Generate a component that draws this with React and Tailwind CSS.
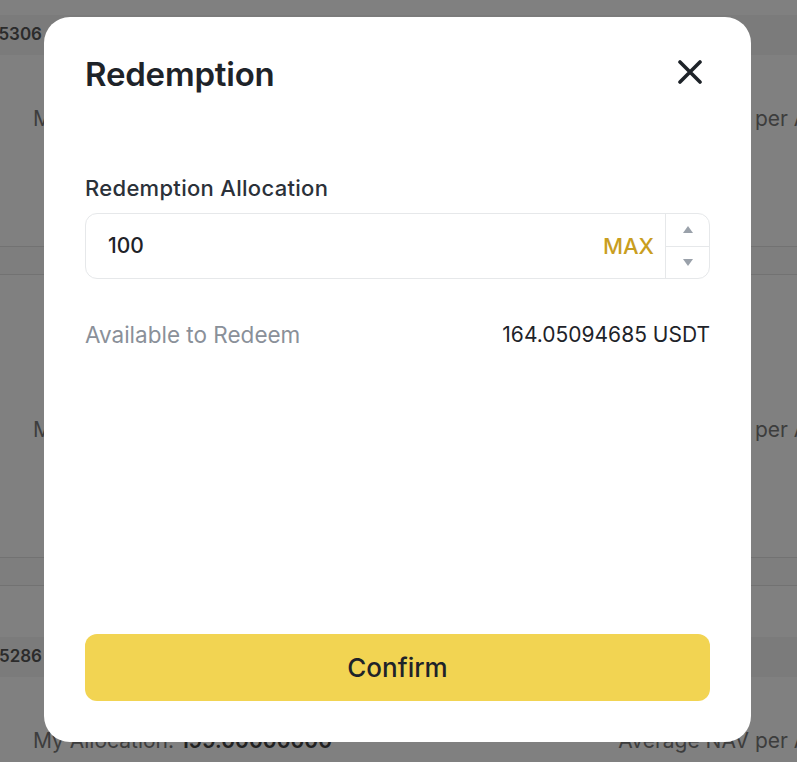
import React from 'react';

const font = { fontFamily: 'Inter, "Noto Sans", sans-serif' };

// one card of the list behind the dialog
function BackCard({ id }) {
  return (
    <div className="h-[282px] shrink-0 flex flex-col">
      <div className={id ? 'mt-[51px] h-[40px] flex items-center bg-[#7b7b7b]' : 'mt-[51px] h-[40px]'}>
        {id && (
          <div className="w-[42px] overflow-hidden flex justify-end">
            <span className="text-[17px] font-semibold text-[#2b2b2b] whitespace-nowrap">{id}</span>
          </div>
        )}
      </div>
      <div className="mt-[48px] flex items-center justify-between px-[33px] whitespace-nowrap text-[21px] text-[#3d3d3d]">
        <span>
          My Allocation: <span className="font-semibold text-[#222]">199.00000000</span>
        </span>
        <span className="mr-[-128px]">Average NAV per Allocation</span>
      </div>
    </div>
  );
}

function Separator() {
  return <div className="h-[29px] shrink-0 border-y border-[#727272] bg-[#7e7e7e]" />;
}

function Stepper() {
  return (
    <div className="w-[44px] self-stretch flex flex-col border-l border-[#e6e8ea]">
      <div className="flex-1 flex items-center justify-center border-b border-[#e6e8ea]">
        <svg width="10" height="7" viewBox="0 0 10 7">
          <path d="M5 0 L10 7 L0 7 Z" fill="#9aa1aa" />
        </svg>
      </div>
      <div className="flex-1 flex items-center justify-center">
        <svg width="10" height="7" viewBox="0 0 10 7">
          <path d="M0 0 L10 0 L5 7 Z" fill="#9aa1aa" />
        </svg>
      </div>
    </div>
  );
}

export default function App() {
  return (
    <div className="relative w-[797px] h-[762px] overflow-hidden bg-[#808080]" style={font}>
      {/* list behind the overlay */}
      <div className="flex flex-col mt-[-36px]">
        <BackCard id="1234565306" />
        <Separator />
        <BackCard />
        <Separator />
        <BackCard id="1234565286" />
      </div>

      {/* dialog */}
      <div className="absolute left-[44px] top-[17px] w-[707px] h-[725px] bg-white rounded-[26px] flex flex-col px-[41px] pt-[40px] pb-[41px]">
        <div className="flex items-center justify-between h-[36px]">
          <h2 className="text-[33px] font-semibold text-[#1e2329] tracking-[-0.2px]">Redemption</h2>
          <button className="mr-[8px] mt-[-6px]">
            <svg width="24" height="24" viewBox="0 0 24 24">
              <path d="M2 2 L22 22 M22 2 L2 22" stroke="#1e2329" strokeWidth="3.6" strokeLinecap="round" />
            </svg>
          </button>
        </div>

        <label className="mt-[81px] text-[22px] tracking-[0.3px] font-medium text-[#2b3139] leading-[28px]">
          Redemption Allocation
        </label>
        <div className="mt-[11px] h-[66px] flex items-center border border-[#e6e8ea] rounded-[12px] overflow-hidden">
          <span className="flex-1 pl-[22px] text-[21px] font-medium text-[#1e2329]">100</span>
          <span className="pr-[11px] text-[22px] font-medium text-[#c99e1f]">MAX</span>
          <Stepper />
        </div>

        <div className="mt-[42px] flex items-center justify-between leading-[28px]">
          <span className="text-[22.5px] text-[#8a9099]">Available to Redeem</span>
          <span className="text-[21px] text-[#1e2329]">164.05094685 USDT</span>
        </div>

        <div className="flex-1" />

        <button className="h-[67px] rounded-[12px] bg-[#f2d452] text-[26px] font-medium text-[#1e2329]">
          Confirm
        </button>
      </div>
    </div>
  );
}
